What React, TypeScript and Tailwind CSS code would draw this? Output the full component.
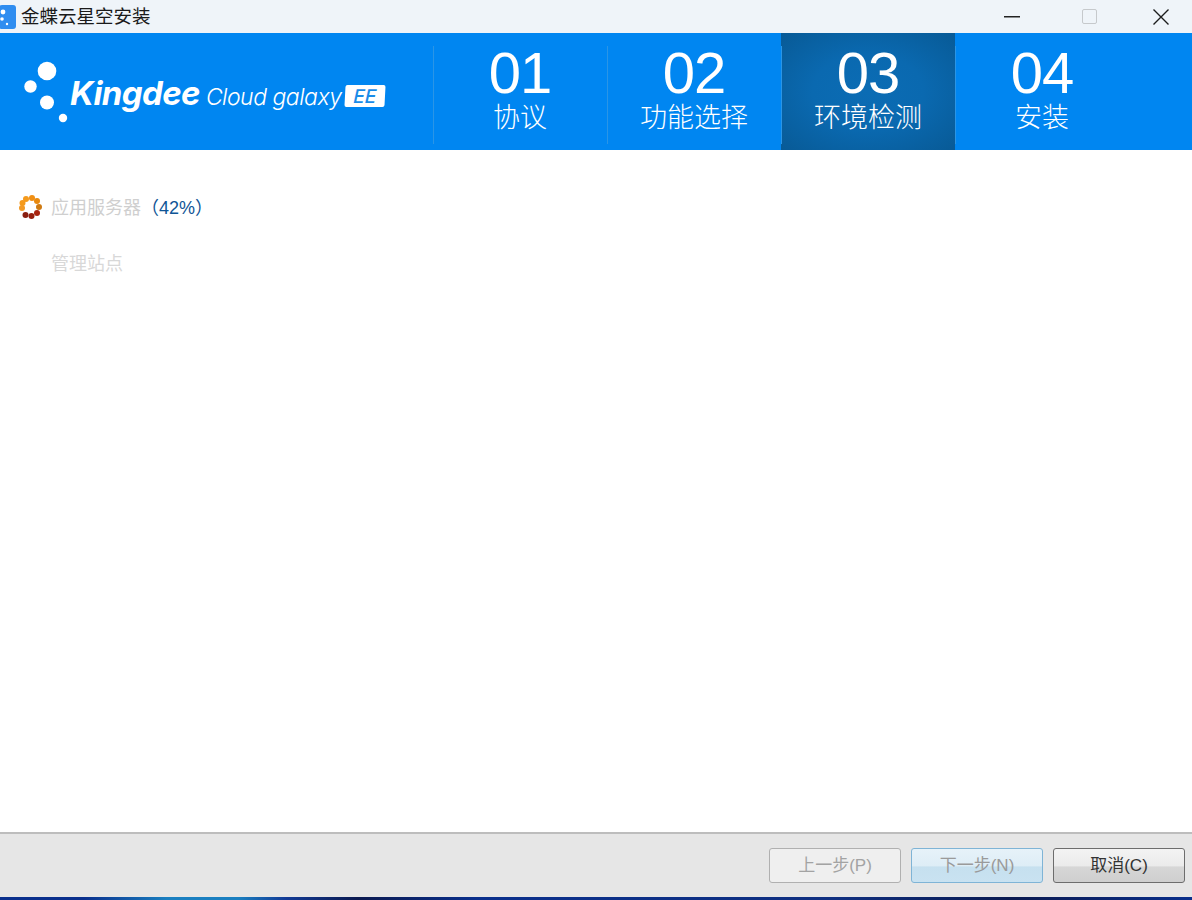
import React from "react";

const CJK = '"Liberation Sans","Noto Sans CJK SC",sans-serif';

function Step({ n, label, active }: { n: string; label: string; active?: boolean }) {
  return (
    <div
      className={
        "relative w-[174px] h-full flex flex-col items-center text-white " +
        (active ? "bg-[radial-gradient(ellipse_at_center,#0b6cb4_0%,#0a69b0_45%,#085a96_100%)]" : "")
      }
    >
      <div className="absolute left-0 top-[13px] bottom-[6px] w-[1px] bg-[#2a95e6]" />
      <div className="text-[58px] leading-[58px] mt-[11px] tracking-[-1px]">{n}</div>
      <div className="text-[27px] leading-[30px] mt-[1px] font-light">{label}</div>
    </div>
  );
}

function Logo() {
  return (
    <div className="relative w-[433px] h-full shrink-0">
      <svg className="absolute left-0 top-0" width="80" height="117" viewBox="0 0 80 117">
        <circle cx="47" cy="38" r="9.3" fill="#fff" />
        <circle cx="30.5" cy="53.5" r="6.2" fill="#fff" />
        <circle cx="47" cy="69.5" r="7" fill="#fff" />
        <circle cx="63" cy="85" r="4.2" fill="#fff" />
      </svg>
      <div className="absolute left-[70px] top-[40px] flex items-baseline text-white">
        <span className="text-[33px] leading-[40px] font-bold italic tracking-[-0.6px] [font-family:Inter,sans-serif]">Kingdee</span>
        <span className="text-[23px] leading-[40px] font-light italic ml-[6px] tracking-[-0.5px] [font-family:Inter,sans-serif]">Cloud galaxy</span>
      </div>
      <div className="absolute left-[345px] top-[52px] w-[40px] h-[22px] bg-white rounded-[2px] -skew-x-3 flex items-center justify-center text-[#1a8ce8] text-[19px] leading-none italic font-medium [font-family:Inter,sans-serif]">
        EE
      </div>
    </div>
  );
}

function Spinner() {
  const dots: [number, number, string][] = [
    [26, 199, "#f59a1c"],
    [32, 198, "#f08f14"],
    [37, 201, "#e8890f"],
    [39, 207, "#cf7a12"],
    [37, 213, "#a8240f"],
    [31.5, 216, "#96200f"],
    [25.5, 215, "#8a1f10"],
    [22, 208, "#f29a26"],
    [22.5, 203, "#f59a1c"],
  ];
  return (
    <svg className="shrink-0" width="26" height="26" viewBox="18 195 26 26">
      {dots.map(([x, y, c], i) => (
        <circle key={i} cx={x} cy={y} r="3" fill={c} />
      ))}
    </svg>
  );
}

function Btn({ label, kind }: { label: string; kind: "off" | "focus" | "on" }) {
  const cls =
    kind === "off"
      ? "border-[#b0b0b0] bg-[#efefef] text-[#a3a3a3]"
      : kind === "focus"
      ? "border-[#7fb4d6] bg-[linear-gradient(180deg,#e6f2f9_0%,#deedf6_50%,#c6e0ef_55%,#c9e2f1_100%)] text-[#9a9a9a]"
      : "border-[#6d6d6d] bg-[linear-gradient(180deg,#f3f3f3_0%,#ebebeb_50%,#d6d6d6_55%,#cfcfcf_100%)] text-[#333]";
  return (
    <div className={"w-[132px] h-[35px] rounded-[3px] border-[1.5px] flex items-center justify-center text-[17px] " + cls}>
      {label}
    </div>
  );
}

export default function App() {
  return (
    <div className="w-[1192px] h-[900px] flex flex-col overflow-hidden bg-white" style={{ fontFamily: CJK }}>
      <div className="h-[33px] shrink-0 bg-[#eff4f9] flex items-center">
        <svg className="ml-[-1px]" width="17" height="26" viewBox="0 0 17 26">
          <rect x="0" y="1" width="17" height="24" rx="3" fill="#2f8df0" />
          <circle cx="4" cy="8" r="2.4" fill="#fff" />
          <circle cx="3" cy="15" r="1.8" fill="#fff" />
          <circle cx="8" cy="20" r="1.2" fill="#fff" />
        </svg>
        <div className="ml-[5px] text-[18.5px] leading-[26px] text-[#1a1a1a]">金蝶云星空安装</div>
        <div className="ml-auto flex items-center">
          <svg width="16" height="2" className="mr-[62px]"><rect width="16" height="1.5" fill="#222" /></svg>
          <div className="w-[15px] h-[15px] border-[1.5px] border-[#c6c9cc] rounded-[2px] mr-[56px]" />
          <svg width="16" height="16" viewBox="0 0 16 16" className="mr-[23px]">
            <path d="M0.5 0.5 15.5 15.5M15.5 0.5 0.5 15.5" stroke="#1c1c1c" strokeWidth="1.4" fill="none" />
          </svg>
        </div>
      </div>

      <div className="h-[117px] shrink-0 bg-[#0086f1] flex">
        <Logo />
        <Step n="01" label="协议" />
        <Step n="02" label="功能选择" />
        <Step n="03" label="环境检测" active />
        <Step n="04" label="安装" />
      </div>

      <div className="flex-1 pt-[45px] pl-[18px]">
        <div className="flex items-center h-[26px] gap-[7px]">
          <Spinner />
          <div className="text-[18px] text-[#cfcfcf]">
            应用服务器<span className="text-[#0f5596]">（42%）</span>
          </div>
        </div>
        <div className="mt-[30px] ml-[33px] h-[26px] leading-[26px] text-[18px] text-[#d8d8d8]">管理站点</div>
      </div>

      <div className="h-[2px] shrink-0 bg-[#bdbdbd]" />
      <div className="h-[63px] shrink-0 bg-[#e6e6e6] flex items-start justify-end pt-[14px] pr-[7px] gap-[10px]">
        <Btn label="上一步(P)" kind="off" />
        <Btn label="下一步(N)" kind="focus" />
        <Btn label="取消(C)" kind="on" />
      </div>
      <div className="h-[3px] shrink-0 bg-[linear-gradient(90deg,#0a2f8c_0%,#0a2f8c_7%,#1a7fc0_14%,#1a7fc0_20%,#123a95_24%,#0b1a50_30%,#0a2f8c_40%,#0f2f80_70%,#0b1a50_85%,#0a2f8c_100%)]" />
    </div>
  );
}
